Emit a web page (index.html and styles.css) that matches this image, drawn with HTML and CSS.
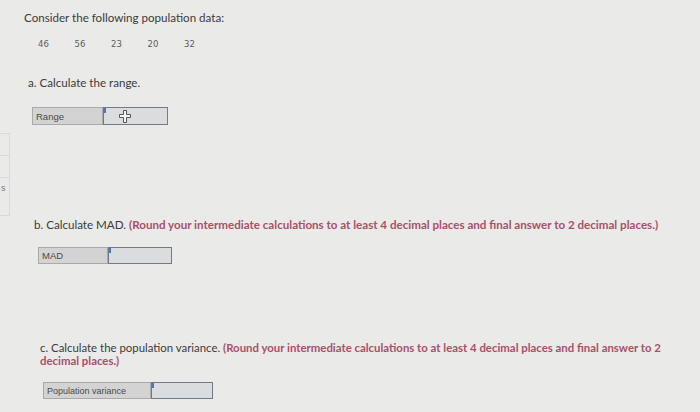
FILE: index.html
```html
<!DOCTYPE html>
<html lang="en">
<head>
<meta charset="utf-8">
<title>Population data</title>
<link rel="stylesheet" href="styles.css">
</head>
<body>
<div class="edge" aria-hidden="true">
  <div class="edge-cell edge-cell-1"></div>
  <div class="edge-cell edge-cell-2"></div>
  <div class="edge-cell edge-cell-3"><span>s</span></div>
</div>
<main class="page">
  <p class="intro">Consider the following population data:</p>
  <div class="data">
    <span class="num">46</span>
    <span class="num">56</span>
    <span class="num">23</span>
    <span class="num">20</span>
    <span class="num">32</span>
  </div>

  <section class="part part-a">
    <p class="question">a. Calculate the range.</p>
    <div class="answer answer-a">
      <div class="label label-a">Range</div>
      <div class="input input-a">
        <span class="caret"></span>
        <svg class="pointer" width="12" height="13" viewBox="0 0 12 13">
          <path d="M4.5 0.5 H7.5 V4.5 H11.5 V7.5 H7.5 V12.5 H4.5 V7.5 H0.5 V4.5 H4.5 Z" fill="#f4f4f4" stroke="#555" stroke-width="1"/>
        </svg>
      </div>
    </div>
  </section>

  <section class="part part-b">
    <p class="question">b. Calculate MAD. <strong class="note">(Round your intermediate calculations to at least 4 decimal places and final answer to 2 decimal places.)</strong></p>
    <div class="answer answer-b">
      <div class="label label-b">MAD</div>
      <div class="input input-b"><span class="caret"></span></div>
    </div>
  </section>

  <section class="part part-c">
    <p class="question question-c">c. Calculate the population variance. <strong class="note">(Round your intermediate calculations to at least 4 decimal places and final answer to 2 decimal places.)</strong></p>
    <div class="answer answer-c">
      <div class="label label-c">Population variance</div>
      <div class="input input-c"><span class="caret"></span></div>
    </div>
  </section>
</main>
</body>
</html>
```

FILE: styles.css
```css
html, body {
  margin: 0;
  padding: 0;
}
body {
  width: 700px;
  height: 412px;
  overflow: hidden;
  background: #eaeae8;
  color: #3b3b3b;
  font-family: "Lato", "Liberation Sans", sans-serif;
  position: relative;
}
.page {
  padding-top: 11px;
}
p {
  margin: 0;
}
.intro {
  padding-left: 24px;
  font-size: 11.6px;
  line-height: 14px;
}
.data {
  display: flex;
  padding-left: 38px;
  margin-top: 13px;
  font-family: "DejaVu Sans", sans-serif;
  font-size: 8.5px;
  line-height: 12px;
  color: #5c5c5c;
}
.num {
  width: 36.5px;
}
.question {
  font-size: 11.6px;
  line-height: 14px;
}
.note {
  color: #a8506a;
  font-weight: 700;
}
.part-a {
  margin-top: 26px;
  padding-left: 28px;
}
.part-b {
  margin-top: 93px;
  padding-left: 34px;
}
.part-c {
  margin-top: 77px;
  padding-left: 40px;
}
.question-c {
  font-size: 11.4px;
  line-height: 13px;
  max-width: 624px;
}
.answer {
  display: flex;
}
.answer-a {
  margin-top: 17px;
  margin-left: 4px;
  height: 18px;
}
.answer-b {
  margin-top: 15px;
  margin-left: 4px;
  height: 17px;
}
.answer-c {
  margin-top: 15px;
  margin-left: 3px;
  height: 17px;
}
.label {
  box-sizing: border-box;
  height: 100%;
  background: #d3d3d3;
  border: 1px solid #a9a9a9;
  font-family: "Liberation Sans", sans-serif;
  font-size: 9.5px;
  color: #4a4a4a;
  padding-left: 3px;
  display: flex;
  align-items: center;
}
.label-a { width: 71px; }
.label-b { width: 70px; }
.label-c { width: 108px; font-size: 9px; }
.input {
  box-sizing: border-box;
  height: 100%;
  background: #dadcdd;
  border: 1px solid #6e7b8a;
  position: relative;
}
.input-a { width: 65px; }
.input-b { width: 64px; }
.input-c { width: 62px; }
.caret {
  position: absolute;
  left: 0;
  top: 0;
  width: 2px;
  height: 5px;
  background: #4a78b8;
}
.pointer {
  position: absolute;
  left: 15px;
  top: 2px;
}
.edge {
  position: absolute;
  left: -2px;
  top: 133px;
  width: 12px;
}
.edge-cell {
  border: 1px solid #d9d9d7;
  border-left: none;
  box-sizing: border-box;
}
.edge-cell-1 { height: 23px; }
.edge-cell-2 { height: 22px; border-top: none; }
.edge-cell-3 {
  height: 38px;
  border-top: none;
  font-size: 9px;
  color: #7a7a7a;
  padding-top: 5px;
  padding-left: 3px;
  font-family: "Liberation Sans", sans-serif;
}
```
